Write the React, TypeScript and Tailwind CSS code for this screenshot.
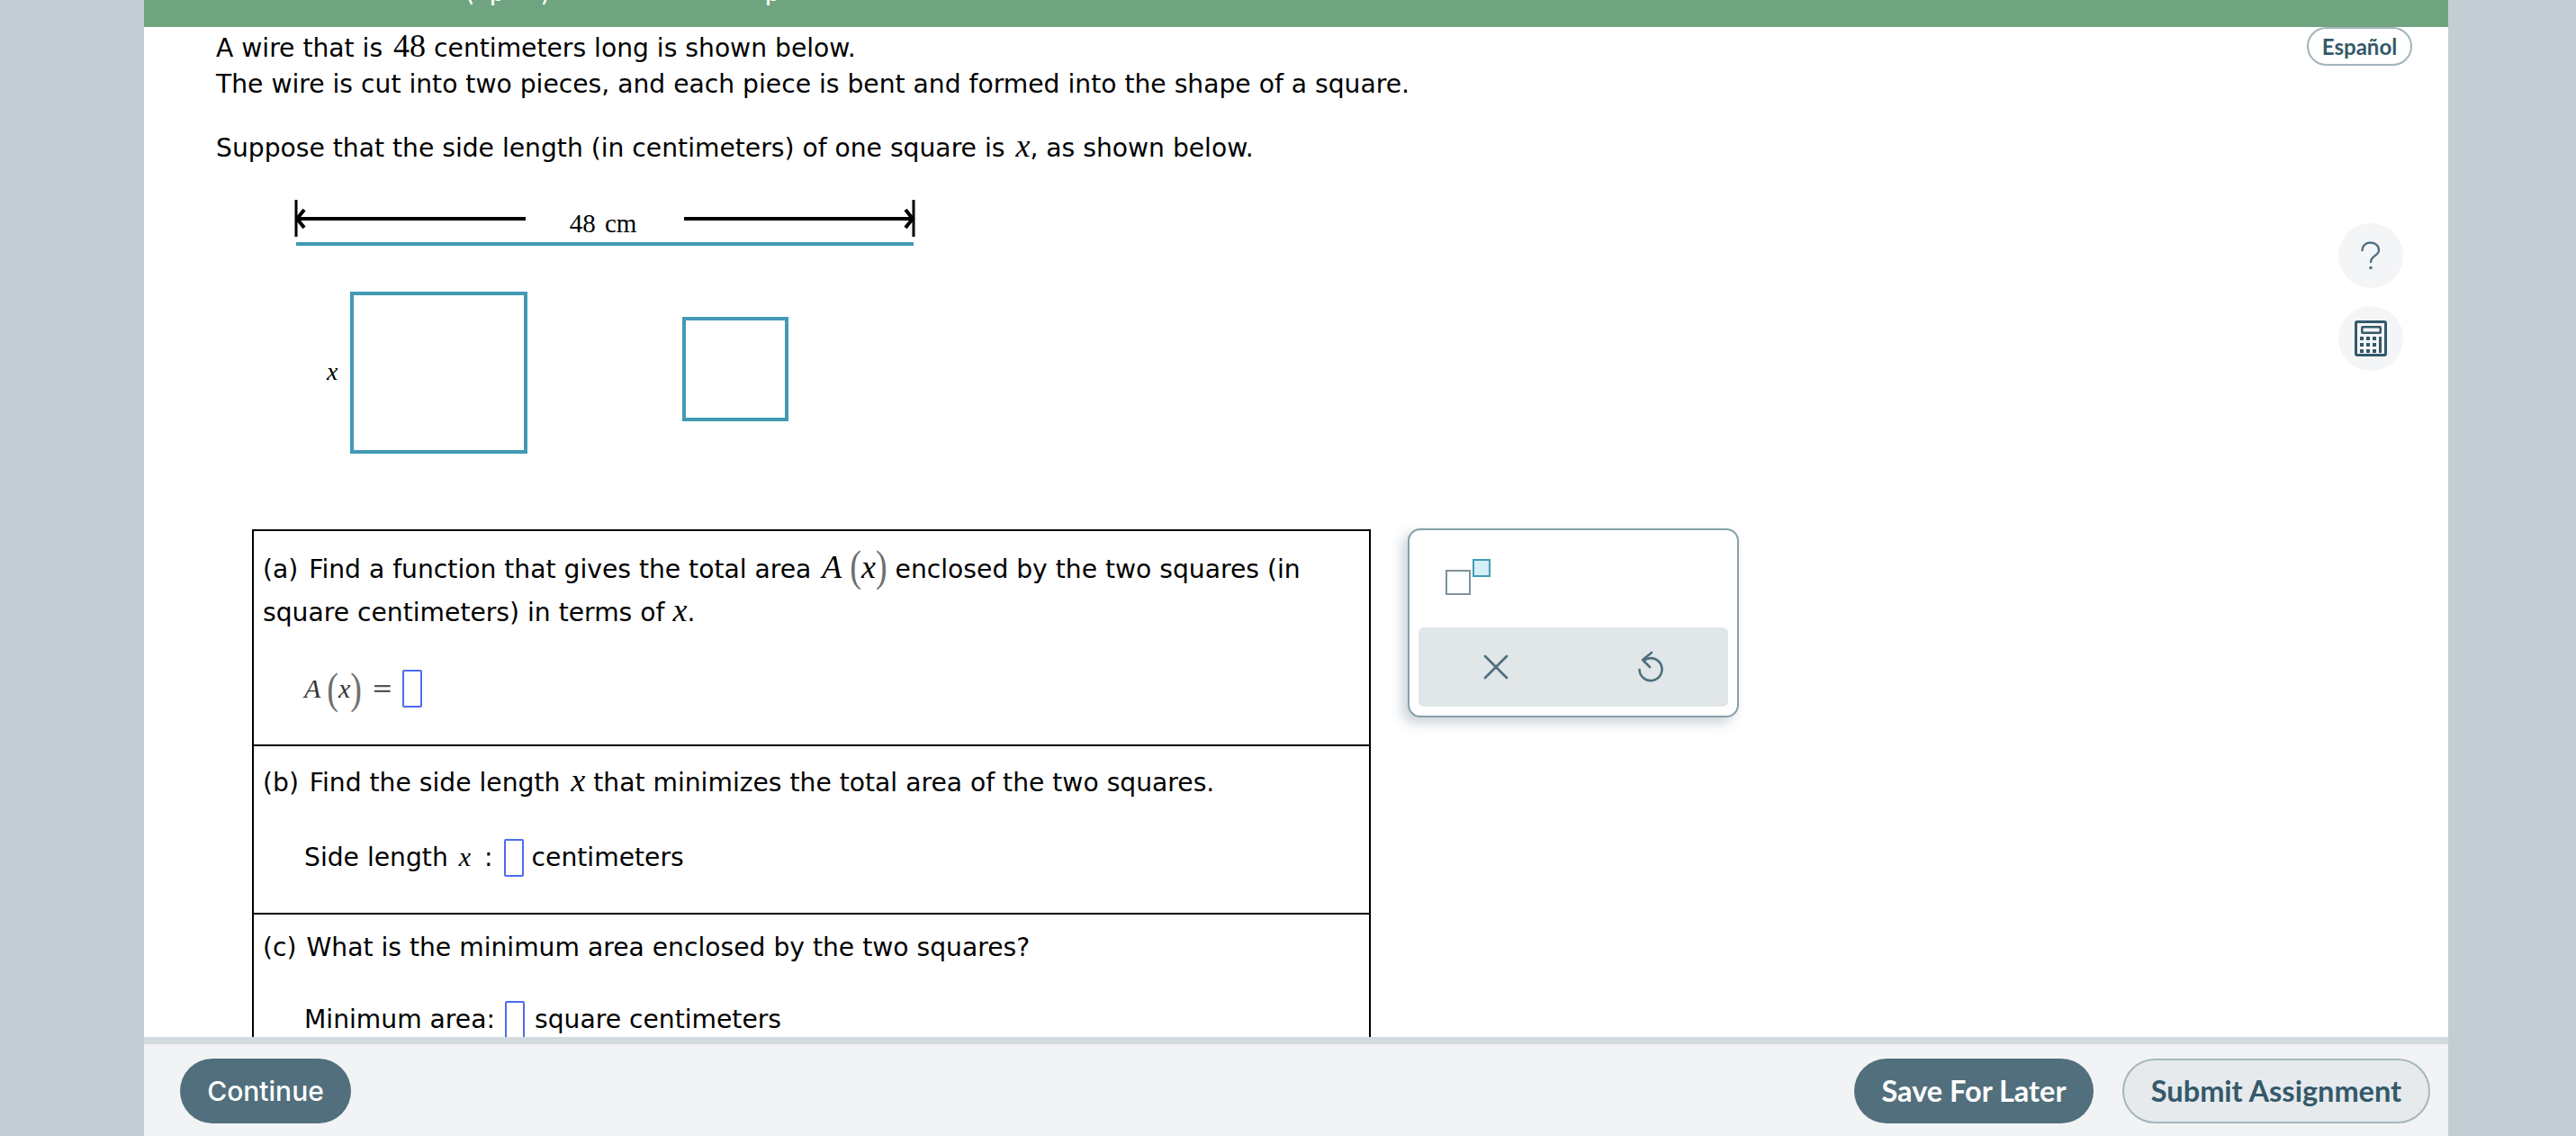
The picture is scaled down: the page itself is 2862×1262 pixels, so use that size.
import { X } from "lucide-react";

const mathCls = "font-['Liberation_Serif',serif] italic leading-none";

function MathX({ size = "text-[36px]" }: { size?: string }) {
  return <span className={`${mathCls} ${size}`}>x</span>;
}

function Paren({ children }: { children: string }) {
  return <span className="inline-block scale-y-[1.25] font-['Liberation_Serif',serif] text-[38px] font-light leading-none text-[#6f6f6f]">{children}</span>;
}

function AnswerBox() {
  return <span className="inline-block h-[42px] w-[22px] shrink-0 rounded-[2px] border-2 border-[#4f6bf0] bg-white align-middle" />;
}

function WireDiagram() {
  return (
    <svg width="700" height="290" viewBox="0 0 700 290" className="ml-[85px] mt-[37px] block">
      <g stroke="#000" fill="none">
        <path d="M4 0V41M690 0V41" strokeWidth="3" />
        <path d="M5 21H259M435 21H689" strokeWidth="4" />
        <path d="M13 11L5 21L13 31M681 11L689 21L681 31" strokeWidth="4" />
      </g>
      <path d="M4 49H690" stroke="#429ab5" strokeWidth="4" />
      <text x="345" y="36" textAnchor="middle" fontFamily="'Liberation Serif', serif" fontSize="29" wordSpacing="3">48 cm</text>
      <text x="38" y="200" fontFamily="'Liberation Serif', serif" fontStyle="italic" fontSize="28">x</text>
      <rect x="66" y="104" width="193" height="176" fill="none" stroke="#429ab5" strokeWidth="4" />
      <rect x="435" y="132" width="114" height="112" fill="none" stroke="#429ab5" strokeWidth="4" />
    </svg>
  );
}

function EditorPanel() {
  return (
    <div className="-mt-px flex h-[210px] w-[368px] shrink-0 flex-col rounded-[14px] border-2 border-[#86a0a8] bg-white px-[10px] pb-[10px] shadow-[-6px_6px_14px_rgba(80,110,125,0.3)]">
      <div className="relative h-[108px]">
        <div className="absolute left-[30px] top-[44px] h-[28px] w-[28px] border-2 border-[#7d939d]" />
        <div className="absolute left-[60px] top-[32px] h-[20px] w-[20px] border-2 border-[#429ab5] bg-[#d5eff4]" />
      </div>
      <div className="flex h-[88px] items-center rounded-[6px] bg-[#e1e6e8] text-[#4f6f7e]">
        <X className="ml-[62px]" size={48} strokeWidth={1.4} />
        <svg width="32" height="38" viewBox="0 0 32 38" fill="none" stroke="currentColor" strokeWidth="2.6" strokeLinecap="round" strokeLinejoin="round" className="ml-[132px]">
          <path d="M17 3L7 11L15 19" />
          <path d="M8 12A12.500 12.500 0 1 1 3.500 22" />
        </svg>
      </div>
    </div>
  );
}

function CalcIcon() {
  return (
    <svg width="36" height="40" viewBox="0 0 36 40" fill="#34596a">
      <path fillRule="evenodd" d="M3 0H33A3 3 0 0 1 36 3V37A3 3 0 0 1 33 40H3A3 3 0 0 1 0 37V3A3 3 0 0 1 3 0ZM3 3V37H33V3Z" />
      <path fillRule="evenodd" d="M9 6H28A2 2 0 0 1 30 8V13A2 2 0 0 1 28 15H9A2 2 0 0 1 7 13V8A2 2 0 0 1 9 6ZM9.500 8.500V12.500H27.500V8.500Z" />
      <rect x="6" y="18" width="4" height="4" /><rect x="13" y="18" width="4" height="4" /><rect x="20" y="18" width="4" height="4" />
      <rect x="6" y="25" width="4" height="4" /><rect x="13" y="25" width="4" height="4" /><rect x="20" y="25" width="4" height="4" />
      <rect x="6" y="32" width="4" height="4" /><rect x="13" y="32" width="4" height="4" /><rect x="20" y="32" width="4" height="4" />
      <rect x="27" y="18" width="3" height="18" />
    </svg>
  );
}

function QuestionIcon() {
  return (
    <svg width="22" height="32" viewBox="0 0 22 32" fill="none" stroke="#527181" strokeWidth="2.4" strokeLinecap="round">
      <path d="M1.500 10C1.500 5 5.500 1.500 10.500 1.500C16 1.500 20 5 20 10C20 16 11 16 11 23" />
      <circle cx="11" cy="29.500" r="1.800" fill="#527181" stroke="none" />
    </svg>
  );
}

export default function App() {
  return (
    <div className="flex h-screen overflow-hidden bg-[#c3ced4] pl-[160px] font-['DejaVu_Sans',sans-serif] text-[28.2px] text-black">
      <div className="flex w-[2560px] flex-col bg-white">
        {/* title is scrolled almost out of view, only its descenders show */}
        <div className="relative h-[30px] shrink-0 overflow-hidden bg-[#70a480] font-['Lato',sans-serif] text-[30px] leading-none text-white">
          <span className="absolute bottom-[26px] left-[358px]">(</span>
          <span className="absolute bottom-[26px] left-[384px]">p</span>
          <span className="absolute bottom-[26px] left-[442px]">)</span>
          <span className="absolute bottom-[26px] left-[690px]">p</span>
        </div>

        <main className="relative min-h-0 flex-1 overflow-hidden pl-[80px] pt-[3px] leading-[40px]">
          <p>
            A wire that is <span className="ml-[3px] font-['Liberation_Serif',serif] text-[36px] leading-none">48</span> centimeters long is shown below.
          </p>
          <p>The wire is cut into two pieces, and each piece is bent and formed into the shape of a square.</p>
          <p className="mt-[30px]">
            Suppose that the side length (in centimeters) of one square is <span className="ml-[3px]"><MathX /></span>, as shown below.
          </p>

          <WireDiagram />

          <div className="ml-[40px] mt-[76px] flex items-start gap-[41px]">
            <div className="w-[1243px] shrink-0 border-2 border-b-0 border-black">
              <div className="h-[239px] border-b-2 border-black pl-[10px] pt-[19px] leading-[48px]">
                <p>
                  <span className="mr-[3px]">(a)</span> Find a function that gives the total area <span className={`${mathCls} ml-[3px] text-[36px]`}>A</span> <Paren>(</Paren>
                  <MathX />
                  <Paren>)</Paren> enclosed by the two squares (in
                </p>
                <p>
                  square centimeters) in terms of <MathX />.
                </p>
                <p className="ml-[46px] mt-[36px] flex items-center text-[#333]">
                  <span className={`${mathCls} mr-[7px] text-[30px]`}>A</span>
                  <Paren>(</Paren>
                  <MathX size="text-[30px]" />
                  <Paren>)</Paren>
                  <span className="mx-[11px] text-[28px] text-[#555]">=</span>
                  <AnswerBox />
                </p>
              </div>
              <div className="h-[187px] border-b-2 border-black pl-[10px] pt-[20px]">
                <p>
                  <span className="mr-[3px]">(b)</span> Find the side length <span className="ml-[3px]"><MathX /></span> that minimizes the total area of the two squares.
                </p>
                <p className="ml-[46px] mt-[42px] flex items-center">
                  Side length
                  <span className="ml-[12px]">
                    <MathX size="text-[30px]" />
                  </span>
                  <span className="ml-[15px] mr-[12px]">:</span>
                  <AnswerBox />
                  <span className="ml-[9px]">centimeters</span>
                </p>
              </div>
              <div className="h-[200px] pl-[10px] pt-[17px]">
                <p>
                  <span className="mr-[2px]">(c)</span> What is the minimum area enclosed by the two squares?
                </p>
                <p className="ml-[46px] mt-[39px] flex items-center gap-[11px]">
                  Minimum area: <AnswerBox /> square centimeters
                </p>
              </div>
            </div>
            <EditorPanel />
          </div>

          <button className="absolute right-[40px] top-0 h-[43px] w-[117px] rounded-full border-2 border-[#a3b5bc] bg-white font-['Lato',sans-serif] text-[24px] font-bold leading-none text-[#34596a]">
            Español
          </button>
          <div className="absolute right-[50px] top-[218px] flex h-[72px] w-[72px] items-center justify-center rounded-full bg-[#f3f5f7]">
            <QuestionIcon />
          </div>
          <div className="absolute right-[50px] top-[310px] flex h-[72px] w-[72px] items-center justify-center rounded-full bg-[#f3f5f7]">
            <CalcIcon />
          </div>
        </main>

        <footer className="flex h-[110px] shrink-0 items-center border-t-[8px] border-[#d3dbde] bg-[#f1f3f5] pl-[40px] pr-[20px] pt-[2px] font-['Lato',sans-serif] font-bold">
          <button className="h-[72px] w-[190px] rounded-full bg-[#516f7c] font-['Inter',sans-serif] text-[30px] font-medium text-white">Continue</button>
          <button className="ml-auto h-[72px] w-[266px] rounded-full bg-[#516f7c] text-[32.5px] text-white">Save For Later</button>
          <button className="ml-[32px] h-[72px] w-[342px] rounded-full border-2 border-[#a5b6bc] bg-[#e6eaed] text-[32.5px] text-[#34596a]">Submit Assignment</button>
        </footer>
      </div>
    </div>
  );
}
